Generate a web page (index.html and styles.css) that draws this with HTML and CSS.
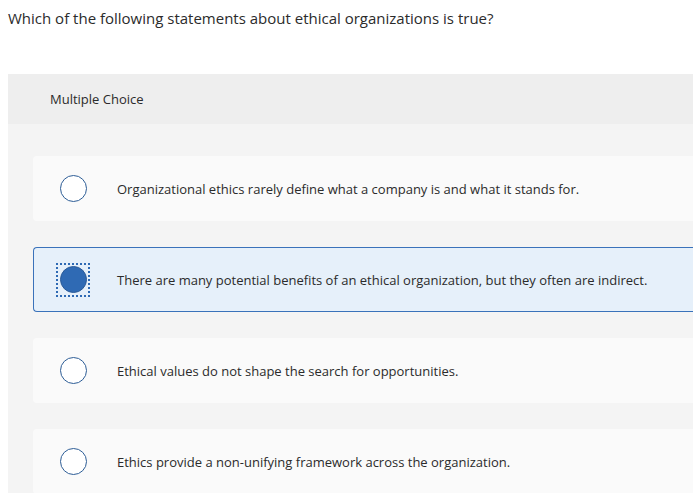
FILE: index.html
```html
<!DOCTYPE html>
<html>
<head>
<meta charset="utf-8">
<link rel="stylesheet" href="styles.css">
</head>
<body>
<div class="page">
  <p class="question">Which of the following statements about ethical organizations is true?</p>
  <div class="panel">
    <div class="panel-head">Multiple Choice</div>
    <div class="options">
      <div class="option">
        <span class="radio-wrap"><span class="radio"></span></span>
        <span class="label">Organizational ethics rarely define what a company is and what it stands for.</span>
      </div>
      <div class="option selected">
        <span class="radio-wrap focus"><span class="radio checked"></span></span>
        <span class="label">There are many potential benefits of an ethical organization, but they often are indirect.</span>
      </div>
      <div class="option">
        <span class="radio-wrap"><span class="radio"></span></span>
        <span class="label">Ethical values do not shape the search for opportunities.</span>
      </div>
      <div class="option">
        <span class="radio-wrap"><span class="radio"></span></span>
        <span class="label">Ethics provide a non-unifying framework across the organization.</span>
      </div>
    </div>
  </div>
</div>
</body>
</html>
```
FILE: styles.css
```css
html, body {
  margin: 0;
  padding: 0;
  overflow: hidden;
  background: #ffffff;
  font-family: "Open Sans", "Liberation Sans", sans-serif;
  color: #333333;
}
.page {
  width: 693px;
  height: 493px;
  overflow: hidden;
}
.question {
  margin: 0;
  padding: 8px 8px 0 8px;
  font-size: 15px;
  line-height: 20px;
  color: #2b2b2b;
}
.panel {
  margin: 46px 0 0 8px;
  background: #f4f4f4;
  height: 419px;
}
.panel-head {
  height: 50px;
  box-sizing: border-box;
  padding-left: 42px;
  display: flex;
  align-items: center;
  background: #eeeeee;
  font-size: 13px;
  color: #2b2b2b;
}
.options {
  padding: 32px 0 0 25px;
  display: flex;
  flex-direction: column;
  gap: 26px;
}
.option {
  height: 65px;
  flex: none;
  box-sizing: border-box;
  border: 1px solid transparent;
  border-right: 0;
  border-radius: 4px 0 0 4px;
  background: #fafafa;
  display: flex;
  align-items: center;
  padding-left: 22px;
}
.option.selected {
  background: #e6f0fa;
  border-color: #3a72ba;
}
.radio-wrap {
  width: 34px;
  height: 34px;
  box-sizing: border-box;
  display: flex;
  align-items: center;
  justify-content: center;
  border: 2px dotted transparent;
  flex: none;
}
.radio-wrap.focus {
  border-color: #2f6ab4;
}
.radio {
  width: 27px;
  height: 27px;
  box-sizing: border-box;
  border-radius: 50%;
  border: 1.5px solid #2d5d96;
  background: #ffffff;
}
.radio.checked {
  background: #2f6ab4;
  border-color: #2a5a98;
}
.label {
  margin-left: 27px;
  font-size: 13px;
  color: #2b2b2b;
}
```
